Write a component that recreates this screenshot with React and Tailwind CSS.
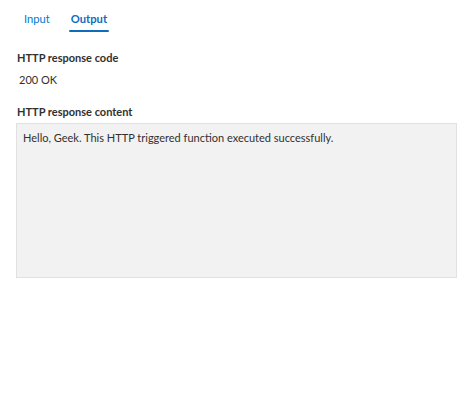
export default function App() {
  return (
    <div className="w-[474px] h-[420px] bg-white text-[11px] text-[#323130]" style={{ fontFamily: 'Lato, "Noto Sans", sans-serif' }}>
      <div className="flex pl-[16px] pt-[8px] gap-[5px]">
        <div className="px-[8px] pt-[1px] pb-[9px] leading-[20px] text-[11.2px] text-[#0078d4]">Input</div>
        <div className="px-[8px] pt-[1px] pb-[9px] leading-[20px] text-[11.2px] text-[#0f6cbd] font-bold relative">
          Output
          <div className="absolute left-[6px] right-[6px] bottom-[6px] h-[2.5px] bg-[#0f6cbd] rounded-full"></div>
        </div>
      </div>
      <div className="px-[16px] pt-[10px]">
        <div className="font-bold leading-[20px] pl-[1px]">HTTP response code</div>
        <div className="pl-[3px] pt-[2px] leading-[20px]">200 OK</div>
        <div className="font-bold leading-[20px] pt-[12px] pl-[1px]">HTTP response content</div>
        <div className="mt-[1px] w-[441px] h-[155px] bg-[#f2f2f2] border border-[#e1e1e1] px-[6px] py-[4px] leading-[20px]">
          Hello, Geek. This HTTP triggered function executed successfully.
        </div>
      </div>
    </div>
  );
}
